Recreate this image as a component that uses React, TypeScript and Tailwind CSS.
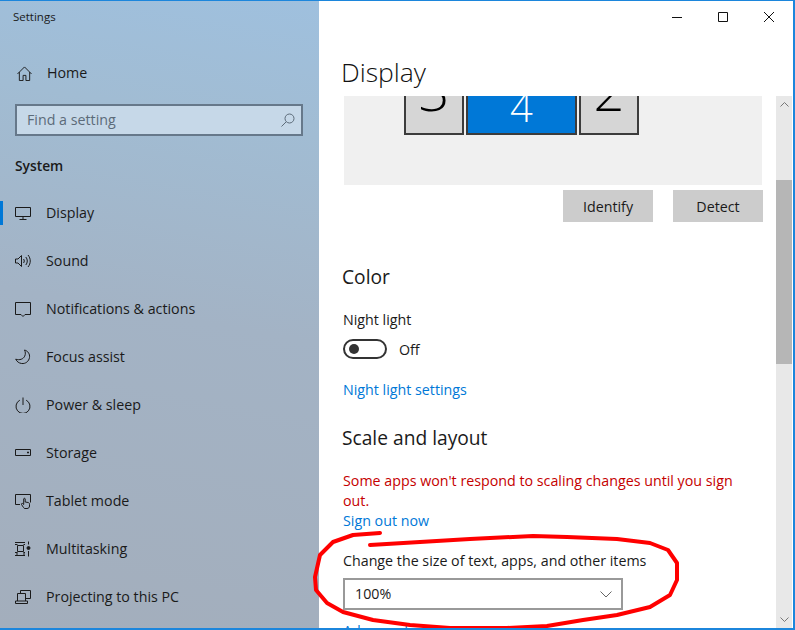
import type { ReactNode } from "react";

const stroke = {
  fill: "none",
  stroke: "#1a1a1a",
  strokeWidth: 1,
};

function Icon({ children }: { children: ReactNode }) {
  return (
    <svg className="h-4 w-4 shrink-0" viewBox="0 0 16 16" {...stroke}>
      {children}
    </svg>
  );
}

const NAV_ITEMS: { label: string; icon: ReactNode; active?: boolean }[] = [
  {
    label: "Display",
    active: true,
    icon: (
      <Icon>
        <path d="M0.5 2.5h15v9h-15z M8 11.5v3 M4.5 14.5h7" />
      </Icon>
    ),
  },
  {
    label: "Sound",
    icon: (
      <Icon>
        <path d="M0.5 6h2.5l3.5-3.5v11l-3.5-3.5h-2.5z M8.5 6c1 1.200 1 2.800 0 4 M10.800 4c2 2.400 2 5.600 0 8 M13 2c3 3.600 3 8.400 0 12" />
      </Icon>
    ),
  },
  {
    label: "Notifications & actions",
    icon: (
      <Icon>
        <path d="M0.500 1.500h15v12h-5.500l-2 2-2-2h-5.500z" />
      </Icon>
    ),
  },
  {
    label: "Focus assist",
    icon: (
      <Icon>
        <path d="M9.500 1c3.500 1 5.500 4 5 7.500-.6 3.800-4 6.500-7.800 6-2.700-.3-4.900-1.900-6-4.300 4 1.300 7.600-.1 9-3 .9-2 .9-4.200-.2-6.200z" />
      </Icon>
    ),
  },
  {
    label: "Power & sleep",
    icon: (
      <Icon>
        <path d="M4.800 3.200a7 7 0 1 0 6.400 0 M8 0.500v7.500" />
      </Icon>
    ),
  },
  {
    label: "Storage",
    icon: (
      <Icon>
        <path d="M0.500 4.500h15v6h-15z" />
        <path d="M12 7.500h2" strokeWidth={1.500} />
      </Icon>
    ),
  },
  {
    label: "Tablet mode",
    icon: (
      <Icon>
        <path d="M5 11.500h-4.500v-10h15v8" />
        <path d="M8.500 14.500l-2-3c-.4-.8.500-1.500 1.200-.9l1 .9v-5.500c0-1 1.500-1 1.500 0v3l3 .5c1 .2 1.300.9 1.300 1.800v1.700c0 1.500-1 2.500-2.500 2.500h-2c-.6 0-1.100-.2-1.500-1z" />
      </Icon>
    ),
  },
  {
    label: "Multitasking",
    icon: (
      <Icon>
        <path d="M0 1.500h10 M2.500 4.500h6v6h-6z M0 3.500h2.500 M8.500 3.500h1.500 M0 11.500h2.500 M8.500 11.500h1.500 M0 14.500h10 M2 11.500v3 M9 11.500v3 M13.500 0.500v3 M13.500 10v5.500" />
        <circle cx="13.500" cy="7" r="1.500" fill="#1a1a1a" />
      </Icon>
    ),
  },
  {
    label: "Projecting to this PC",
    icon: (
      <Icon>
        <path d="M5.500 4v-2.500h10v8h-5 M2.500 12v-7.500h8v7.500 M0.500 12h12v2.500h-12z" />
      </Icon>
    ),
  },
];

function Sidebar() {
  return (
    <div className="flex h-full w-[319px] shrink-0 flex-col bg-[linear-gradient(190deg,#9fc0de_0%,#a1bcd3_20%,#a3b3c5_50%,#a3aebc_100%)] text-[#1a1a1a]">
      <div className="flex h-8 items-center pl-[13px] text-[11.5px]">Settings</div>
      <div className="mt-4 flex h-12 items-center text-[14.25px]">
        <svg className="ml-[17px] h-[15px] w-[15px]" viewBox="0 0 16 16" {...stroke}>
          <path d="M0.500 8.500l7.500-7.500 7.500 7.500 M2.500 6.500v9h4v-5.500h3v5.500h4v-9" />
        </svg>
        <span className="ml-[15px]">Home</span>
      </div>
      <div className="mt-[7px] mr-4 ml-[15px] flex h-8 items-center justify-between border-2 border-[#66788a] bg-[#c6d8e8] pr-[6px] pl-[10px] text-[14.25px] text-[#5c6b79]">
        <span>Find a setting</span>
        <svg className="h-[14px] w-[14px]" viewBox="0 0 14 14" fill="none" stroke="#5c6b79" strokeWidth={1}>
          <circle cx="8.500" cy="5.500" r="4.500" />
          <path d="M5.200 8.800l-4.700 4.700" />
        </svg>
      </div>
      <div className="mt-5 flex h-5 items-center pl-[15px] text-[13.8px] font-semibold">System</div>
      <div className="mt-[13px] flex flex-col">
        {NAV_ITEMS.map((item) => (
          <div className="flex h-12 items-center text-[14.25px]" key={item.label}>
            <div className={`h-6 w-[3px] ${item.active ? "bg-[#0078d7]" : ""}`} />
            <div className="ml-[12px] flex items-center">{item.icon}</div>
            <span className="ml-[15px]">{item.label}</span>
          </div>
        ))}
      </div>
    </div>
  );
}

function WindowControls() {
  return (
    <div className="flex h-8 items-center justify-end pr-[18px]">
      <svg className="h-[10px] w-[10px]" viewBox="0 0 10 10" fill="none" stroke="#111" strokeWidth={1}>
        <path d="M0 5.500h10" />
      </svg>
      <svg className="ml-[36px] h-[10px] w-[10px]" viewBox="0 0 10 10" fill="none" stroke="#111" strokeWidth={1}>
        <path d="M0.500 0.500h9v9h-9z" />
      </svg>
      <svg className="ml-[36px] h-[10px] w-[10px]" viewBox="0 0 10 10" fill="none" stroke="#111" strokeWidth={1}>
        <path d="M0 0l10 10 M10 0l-10 10" />
      </svg>
    </div>
  );
}

function MonitorPreview() {
  return (
    <div className="ml-[25px] h-[89px] w-[418px] bg-[#f0f0f0]">
      <div className="ml-[60px] flex h-[39px] gap-[2px]">
        <div className="flex h-full w-[60px] items-end justify-center overflow-hidden border-x-2 border-b-2 border-[#3c3c3c] bg-[#d6d6d6] text-[54px] leading-[70px] font-light text-black">
          <span className="mb-[8px]">3</span>
        </div>
        <div className="flex h-full w-[111px] items-end justify-center overflow-hidden border-x-2 border-b-2 border-[#3c3c3c] bg-[#0078d7] text-[40px] leading-[54px] font-light text-white">
          <span className="-mb-[1px]">4</span>
        </div>
        <div className="flex h-full w-[60px] items-end justify-center overflow-hidden border-x-2 border-b-2 border-[#3c3c3c] bg-[#d6d6d6] text-[54px] leading-[70px] font-light text-black">
          <span className="mb-[8px]">2</span>
        </div>
      </div>
    </div>
  );
}

function Content() {
  return (
    <div className="h-full min-w-0 flex-1 overflow-hidden text-[14.25px] text-[#1a1a1a]">
      <MonitorPreview />
      <div className="mt-[5px] ml-[244px] flex gap-5">
        <div className="flex h-8 w-[90px] items-center justify-center bg-[#cccccc] pt-[1px]">Identify</div>
        <div className="flex h-8 w-[90px] items-center justify-center bg-[#cccccc] pt-[1px]">Detect</div>
      </div>
      <div className="ml-[23px] flex flex-col items-start">
        <div className="mt-[41px] flex h-7 items-center text-[19.2px]">Color</div>
        <div className="mt-[19px] flex h-5 items-center pl-[1px]">Night light</div>
        <div className="mt-[9px] flex h-5 items-center pl-[1px]">
          <div className="flex h-5 w-11 items-center rounded-full border-2 border-[#333333] pl-[4px]">
            <div className="h-[10px] w-[10px] rounded-full bg-[#333333]" />
          </div>
          <span className="ml-3 pt-[1px]">Off</span>
        </div>
        <div className="mt-[21px] flex h-5 items-center pl-[1px] text-[#0078d7]">Night light settings</div>
        <div className="mt-[24px] flex h-7 items-center text-[19.2px]">Scale and layout</div>
        <div className="mt-[19px] w-[410px] pl-[1px] leading-[20px] text-[#c50000]">
          Some apps won't respond to scaling changes until you sign out.
        </div>
        <div className="flex h-5 items-center pl-[1px] text-[#0078d7]">Sign out now</div>
        <div className="mt-[20px] flex h-5 items-center pl-[1px]">Change the size of text, apps, and other items</div>
        <div className="mt-[7px] ml-[1px] flex h-8 w-[280px] items-center justify-between border-2 border-[#999999] pr-[9px] pl-[10px]">
          <span>100%</span>
          <svg className="h-[7px] w-3" viewBox="0 0 12 7" fill="none" stroke="#666" strokeWidth={1}>
            <path d="M0.500 0.500l5.500 5.500 5.500-5.500" />
          </svg>
        </div>
        <div className="mt-[11px] flex h-5 items-center pl-[1px] text-[#0078d7]">Advanced scaling settings</div>
      </div>
    </div>
  );
}

function Scrollbar() {
  return (
    <div className="flex h-full w-4 shrink-0 flex-col items-center bg-[#e8e8e8]">
      <div className="flex h-[84px] w-full items-start justify-center pt-[6px]">
        <svg className="h-[5px] w-[9px]" viewBox="0 0 9 5" fill="none" stroke="#777" strokeWidth={1}>
          <path d="M0.500 4.500l4-4 4 4" />
        </svg>
      </div>
      <div className="h-[184px] w-full bg-[#b6b6b6]" />
      <div className="flex w-full flex-1 items-end justify-center pb-[6px]">
        <svg className="h-[5px] w-[9px]" viewBox="0 0 9 5" fill="none" stroke="#777" strokeWidth={1}>
          <path d="M0.500 0.500l4 4 4-4" />
        </svg>
      </div>
    </div>
  );
}

export default function App() {
  return (
    <div className="relative flex h-[630px] w-[795px] overflow-hidden border-t border-r-2 border-b-2 border-[#1c86dc] bg-white font-['Open_Sans',sans-serif]">
      <Sidebar />
      <div className="flex min-w-0 flex-1 flex-col pr-[1px]">
        <WindowControls />
        <div className="flex h-[63px] shrink-0 items-center pt-[16px] pl-[22px] text-[26.5px] font-light text-[#111]">Display</div>
        <div className="flex min-h-0 flex-1">
          <Content />
          <Scrollbar />
        </div>
      </div>
      {/* hand-drawn marker circle round the scale dropdown */}
      <svg className="pointer-events-none absolute top-[-1px] left-0 h-[630px] w-[795px]" viewBox="0 0 795 630" fill="none" stroke="#ff0000" strokeWidth={4} strokeLinejoin="round" strokeLinecap="round">
        <path d="M370 545L420 542L470 539L533 536L567 537L617 539L650 543L668 550L677 563L677 580L670 595L650 607L617 615L583 620L547 626L507 628L450 628L410 625L373 620L343 612L327 603L316 590L315 577L320 555L333 542L353 535L380 533" />
      </svg>
    </div>
  );
}
